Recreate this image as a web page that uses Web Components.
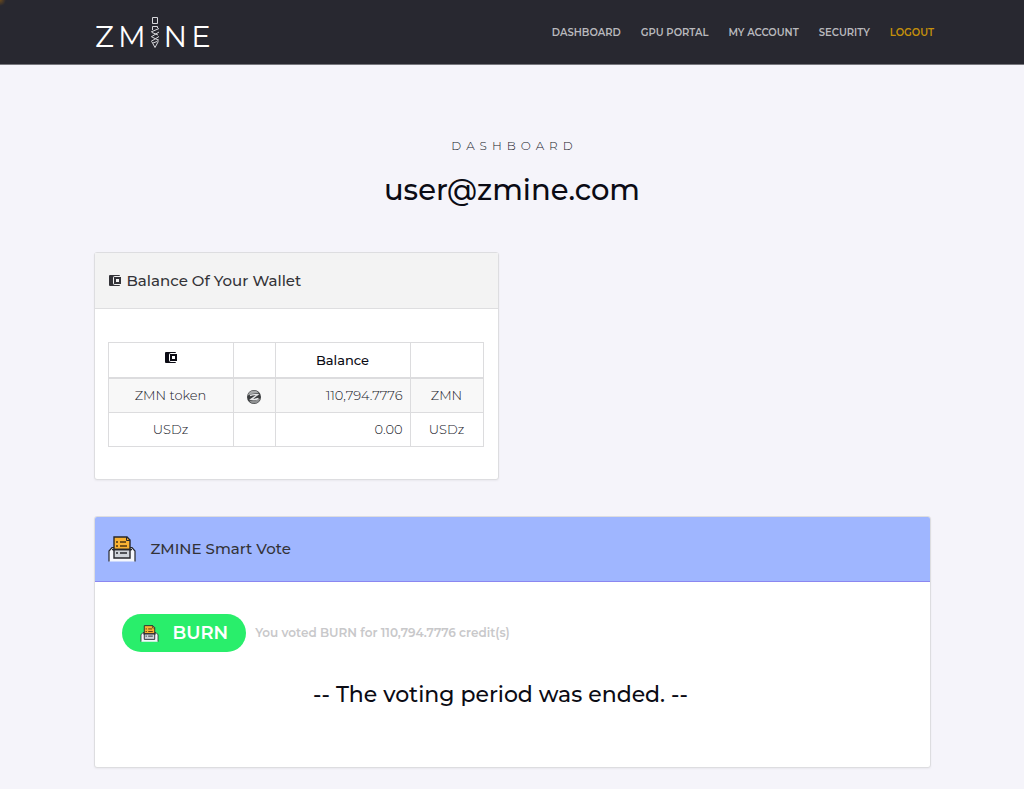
<!DOCTYPE html>
<html lang="en">
<head>
<meta charset="utf-8">
<meta name="viewport" content="width=device-width, initial-scale=1">
<title>ZMINE Dashboard</title>
<style>
  body { margin: 0; background: #f5f4fa; color: #0b0b14; font-family: Montserrat, Inter, "Open Sans", sans-serif; font-size: 14px; line-height: 20px; }
</style>
</head>
<body>
<zm-app></zm-app>
<script>
const define = (name, html) => customElements.define(name, class extends HTMLElement {
  constructor() {
    super();
    this.attachShadow({ mode: 'open' }).innerHTML = html;
  }
});

define('zm-wallet-icon', `
<style>:host { display: inline-block; width: 12px; height: 11px; } svg { display: block; width: 100%; height: 100%; }</style>
<svg viewBox="0 0 12 11" aria-hidden="true">
  <path fill="currentColor" d="M1 0H10Q11 0 11 1H6Q4 1 4 3V8Q4 10 6 10H11Q11 11 10 11H1Q0 11 0 10V1Q0 0 1 0Z"/>
  <path fill="currentColor" fill-rule="evenodd" d="M5 2H12V9H5ZM7 4V7H10V4Z"/>
</svg>`);

define('zm-coin-icon', `
<style>:host { display: inline-block; width: 14px; height: 14px; } svg { display: block; }</style>
<svg width="14" height="14" viewBox="0 0 14 14" aria-hidden="true">
  <circle cx="7" cy="7" r="7" fill="#3a3c3e"/>
  <path d="M.8 5.500A6.300 6.300 0 0 1 12 3.200L8 3.500Q4 3.500 .8 5.500Z" fill="#a5a7a8"/>
  <path d="M13.200 8.500A6.300 6.300 0 0 1 2 10.800L6 10.500Q10 10.500 13.200 8.500Z" fill="#8f9192"/>
  <path d="M3 5.500Q6 4.300 10.500 4.800L4 9.300Q8 9.800 11.500 8.500" fill="none" stroke="#e6e7e8" stroke-width="1.400"/>
</svg>`);

define('zm-vote-icon', `
<style>:host { display: block; width: 28px; height: 26px; } svg { display: block; width: 100%; height: 100%; }</style>
<svg viewBox="0 0 28 26" aria-hidden="true">
  <path d="M1 25.500V15L4 11.500H24L27 15V25.500" fill="#f5f7fc" stroke="#26272e" stroke-width="1.200"/>
  <path d="M6 14V1H19L22 4V14Z" fill="#f9b233" stroke="#26272e" stroke-width="1.400"/>
  <path d="M18.500 1V4.500H22" fill="none" stroke="#26272e"/>
  <path d="M8 6H10M12 6H18M8 10H10M12 10H19" stroke="#4c3513" stroke-width="1.400"/>
  <path d="M6 13.500H22V22H6Z" fill="#cfd4db" stroke="#26272e" stroke-width="1.400"/>
  <path d="M4 13.500H24M8 17H10M12 17H19" stroke="#26272e" stroke-width="1.400"/>
</svg>`);

define('zm-logo', `
<style>
  :host { display: block; padding: 10px 0 0 5px; }
  a { display: flex; align-items: center; color: #fff; text-decoration: none; font-size: 29px; line-height: 32px; font-weight: 400; }
  .word { letter-spacing: 4px; }
  svg { display: block; margin: 0 4px 9px 0; }
</style>
<a href="#" aria-label="ZMINE">
  <span class="word">ZM</span>
  <svg width="10" height="33" viewBox="0 0 10 33" fill="none" stroke="#d8d8dc" aria-hidden="true">
    <path d="M2.500 1.500H7.500V7.500H2.500ZM2.500 14V10.500H7.500V12M1 16L9 12.500M1 21L9 16M1 25.500L9 20.500M2 16.500L8 19M2 21L8 24M2 26L5 31.500L8 26V23M3 27L7 25.500"/>
  </svg>
  <span class="word">NE</span>
</a>`);

define('zm-nav-link', `
<style>
  :host { display: block; color: #b9b9bd; }
  :host([accent]) { color: #c4900b; }
  a { color: inherit; text-decoration: none; text-transform: uppercase; font-size: 10px; line-height: 16px; font-weight: 600; }
</style>
<a href="#"><slot></slot></a>`);

define('zm-header', `
<style>
  :host { display: block; background: radial-gradient(circle at 0 0, #6b4a1c, #282830 6px); border-bottom: 1px solid #77777d; }
  .bar { display: flex; justify-content: space-between; align-items: center; max-width: 844px; min-height: 64px; margin: 0 auto; }
  nav { display: flex; gap: 20px; padding-bottom: 2px; }
</style>
<div class="bar">
  <zm-logo></zm-logo>
  <nav aria-label="Main">
    <zm-nav-link>Dashboard</zm-nav-link>
    <zm-nav-link>GPU Portal</zm-nav-link>
    <zm-nav-link>My Account</zm-nav-link>
    <zm-nav-link>Security</zm-nav-link>
    <zm-nav-link accent>Logout</zm-nav-link>
  </nav>
</div>`);

define('zm-page-title', `
<style>
  :host { display: block; text-align: center; }
  p { margin: 0 0 16px; padding-left: 5px; font-size: 12px; line-height: 16px; font-weight: 300; letter-spacing: 5px; color: #14161f; text-transform: uppercase; }
  h1 { margin: 0; font-size: 29px; line-height: 40px; font-weight: 500; }
</style>
<p><slot name="section"></slot></p>
<h1><slot></slot></h1>`);

define('zm-card', `
<style>
  :host { display: block; background: #fff; border: 1px solid #dddde0; border-radius: 3px; box-shadow: 0 1px 2px #0000000d; }
  header { display: flex; align-items: center; min-height: 56px; box-sizing: border-box; padding: 0 14px; gap: 6px; background: #f3f3f3; border-bottom: 1px solid #dedee0; color: #333338; }
  h2 { margin: 0; font-size: 15px; line-height: 24px; font-weight: 500; }
  :host([tone="vote"]) header { min-height: 65px; padding: 0 13px; gap: 15px; background: #9fb6ff; border-bottom-color: #8b86f0; border-radius: 2px 2px 0 0; }
</style>
<section>
  <header><slot name="icon"></slot><h2><slot name="title"></slot></h2></header>
  <slot></slot>
</section>`);

define('zm-balance-table', `
<style>
  :host { display: block; padding: 33px 14px 32px 13px; color: #16171f; }
  table { width: 100%; border-collapse: collapse; table-layout: fixed; font-size: 13px; line-height: 19px; }
  th, td { height: 19px; padding: 7px; border: 1px solid #dcdcde; text-align: center; font-weight: 300; }
  thead th { height: 20px; border-bottom-width: 2px; line-height: 20px; font-weight: 500; color: #0b0b14; }
  tbody tr:first-child { background: #f8f8f8; }
  td.amount { text-align: right; }
  .name { width: calc(100% / 3); } .coin { width: 42px; } .sum { width: 36%; }
  zm-coin-icon { display: block; margin: 3px auto 0; }
  thead zm-wallet-icon { display: block; margin: 0 auto 5px; }
</style>
<table>
  <colgroup><col class="name"><col class="coin"><col class="sum"><col></colgroup>
  <thead><tr><th scope="col" aria-label="Wallet"><zm-wallet-icon></zm-wallet-icon></th><th></th><th scope="col">Balance</th><th></th></tr></thead>
  <tbody>
    <tr><th scope="row">ZMN token</th><td><zm-coin-icon></zm-coin-icon></td><td class="amount">110,794.7776</td><td>ZMN</td></tr>
    <tr><th scope="row">USDz</th><td></td><td class="amount">0.00</td><td>USDz</td></tr>
  </tbody>
</table>`);

define('zm-vote-result', `
<style>
  :host { display: block; padding: 32px 50px 56px 27px; }
  .choice { display: flex; align-items: center; gap: 9px; flex-wrap: wrap; }
  button { display: flex; align-items: center; gap: 14px; height: 38px; padding: 0 18px; border: 0; border-radius: 19px; background: #29ee6b; color: #fff; font: inherit; font-size: 18px; font-weight: 600; }
  button zm-vote-icon { width: 19px; height: 17px; }
  .note { font-size: 12px; font-weight: 600; color: #c8c8ca; }
  h3 { margin: 27px 0 0; text-align: center; font-size: 22px; line-height: 32px; font-weight: 500; }
</style>
<div class="choice">
  <button type="button"><zm-vote-icon></zm-vote-icon>BURN</button>
  <span class="note">You voted BURN for 110,794.7776 credit(s)</span>
</div>
<h3>-- The voting period was ended. --</h3>`);

define('zm-app', `
<style>
  :host { display: block; }
  main { max-width: 837px; margin: 0 auto; padding: 73px 0 22px; }
  .wallets { display: grid; grid-template-columns: repeat(2, 1fr); gap: 27px; margin: 42px 0 36px; }
</style>
<zm-header></zm-header>
<main>
  <zm-page-title><span slot="section">Dashboard</span>user@zmine.com</zm-page-title>
  <div class="wallets">
    <zm-card>
      <zm-wallet-icon slot="icon"></zm-wallet-icon>
      <span slot="title">Balance Of Your Wallet</span>
      <zm-balance-table></zm-balance-table>
    </zm-card>
  </div>
  <zm-card tone="vote">
    <zm-vote-icon slot="icon"></zm-vote-icon>
    <span slot="title">ZMINE Smart Vote</span>
    <zm-vote-result></zm-vote-result>
  </zm-card>
</main>`);
</script>
</body>
</html>
